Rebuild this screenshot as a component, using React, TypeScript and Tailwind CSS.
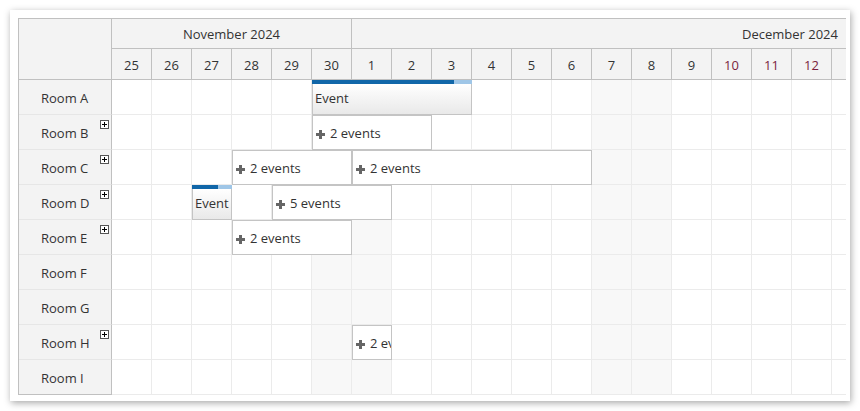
import React from 'react';

type Box = { start: number; span: number; label: string; kind: 'event' | 'more'; done?: number };

const days = [25, 26, 27, 28, 29, 30, 1, 2, 3, 4, 5, 6, 7, 8, 9, 10, 11, 12, 13];
const weekend = [5, 6, 12, 13];
const redDays = [15, 16, 17];

const rooms: { name: string; expand: boolean; boxes: Box[] }[] = [
    { name: 'Room A', expand: false, boxes: [{ start: 5, span: 4, label: 'Event', kind: 'event', done: 142 }] },
    { name: 'Room B', expand: true, boxes: [{ start: 5, span: 3, label: '2 events', kind: 'more' }] },
    {
        name: 'Room C',
        expand: true,
        boxes: [
            { start: 3, span: 3, label: '2 events', kind: 'more' },
            { start: 6, span: 6, label: '2 events', kind: 'more' },
        ],
    },
    {
        name: 'Room D',
        expand: true,
        boxes: [
            { start: 2, span: 1, label: 'Event', kind: 'event', done: 26 },
            { start: 4, span: 3, label: '5 events', kind: 'more' },
        ],
    },
    { name: 'Room E', expand: true, boxes: [{ start: 3, span: 3, label: '2 events', kind: 'more' }] },
    { name: 'Room F', expand: false, boxes: [] },
    { name: 'Room G', expand: false, boxes: [] },
    { name: 'Room H', expand: true, boxes: [{ start: 6, span: 1, label: '2 events', kind: 'more' }] },
    { name: 'Room I', expand: false, boxes: [] },
];

function PlusGlyph() {
    return (
        <svg width="9" height="9" viewBox="0 0 9 9" className="shrink-0">
            <path d="M3 0h3v3h3v3h-3v3h-3v-3h-3v-3h3z" fill="#666" />
        </svg>
    );
}

function ExpandIcon() {
    return (
        <div className="absolute right-[2px] top-[5px] w-[9px] h-[9px] border border-[#555] bg-white flex items-center justify-center">
            <svg width="7" height="7" viewBox="0 0 7 7">
                <path d="M3 1h1v2h2v1h-2v2h-1v-2h-2v-1h2z" fill="#000" />
            </svg>
        </div>
    );
}

function TimelineBox({ box }: { box: Box }) {
    const left = box.start * 40;
    const width = box.span * 40;
    if (box.kind === 'event') {
        return (
            <div className="absolute top-0 h-[35px] flex flex-col overflow-hidden" style={{ left, width }}>
                <div className="flex h-[4px] shrink-0">
                    <div className="bg-[#1066a8] h-full" style={{ width: box.done }} />
                    <div className="bg-[#9fc6e7] h-full flex-1" />
                </div>
                <div className="flex-1 flex items-center pl-[2px] border-x border-b border-[#c4c4c4] bg-linear-to-b from-white to-[#e9e9e9] whitespace-nowrap">
                    {box.label}
                </div>
            </div>
        );
    }
    return (
        <div
            className="absolute top-0 h-[35px] flex items-center gap-[5px] pl-[3px] pt-[3px] bg-white border border-[#c4c4c4] overflow-hidden whitespace-nowrap"
            style={{ left, width }}
        >
            <PlusGlyph />
            <span>{box.label}</span>
        </div>
    );
}

export default function App() {
    return (
        <div className="w-[860px] h-[411px] bg-white pt-[10px] pl-[10px] text-[13px] text-[#333]" style={{ fontFamily: '"Open Sans", "Noto Sans", sans-serif' }}>
            <div className="w-[840px] h-[391px] bg-white shadow-[1px_2px_7px_rgba(0,0,0,0.35)] pt-[8px] pl-[8px] overflow-hidden">
                <div className="w-[828px] h-[377px] overflow-hidden border-l border-t border-[#c0c0c0] flex flex-col">
                    {/* header */}
                    <div className="flex shrink-0">
                        <div className="w-[93px] h-[61px] shrink-0 bg-[#f3f3f3] border-r border-b border-[#c0c0c0]" />
                        <div className="flex flex-col flex-1 min-w-0 bg-[#f3f3f3] overflow-hidden">
                            <div className="flex h-[30px] border-b border-[#c0c0c0] pt-[3px]">
                                <div className="w-[240px] shrink-0 border-r border-[#c0c0c0] -mt-[3px] pt-[3px] flex items-center justify-center">November 2024</div>
                                <div className="flex-1 flex items-center justify-end pr-[8px] whitespace-nowrap">December 2024</div>
                            </div>
                            <div className="flex h-[31px] border-b border-[#c0c0c0]">
                                {days.map((d, i) => (
                                    <div
                                        key={i}
                                        className={`w-[40px] shrink-0 border-r border-[#c0c0c0] flex items-center justify-center pt-[3px] ${redDays.includes(i) ? 'text-[#7c1f3e]' : ''}`}
                                    >
                                        {i < days.length - 1 ? d : ''}
                                    </div>
                                ))}
                            </div>
                        </div>
                    </div>

                    {/* rows */}
                    {rooms.map((room, r) => (
                        <div key={room.name} className="flex shrink-0 h-[35px]">
                            <div
                                className={`relative w-[93px] shrink-0 bg-[#f3f3f3] border-r border-b border-r-[#c0c0c0] flex items-center pl-[22px] pt-[3px] ${r === rooms.length - 1 ? 'border-b-[#c0c0c0]' : 'border-b-[#e6e6e6]'}`}
                            >
                                {room.name}
                                {room.expand && <ExpandIcon />}
                            </div>
                            <div className="relative flex flex-1 min-w-0 border-b border-[#ebebeb]">
                                {days.map((_, i) => (
                                    <div
                                        key={i}
                                        className={`w-[40px] shrink-0 border-r border-[#ebebeb] ${weekend.includes(i) ? 'bg-[#f8f8f8]' : 'bg-white'}`}
                                    />
                                ))}
                                {room.boxes.map((b, k) => (
                                    <TimelineBox key={k} box={b} />
                                ))}
                            </div>
                        </div>
                    ))}
                </div>
            </div>
        </div>
    );
}
